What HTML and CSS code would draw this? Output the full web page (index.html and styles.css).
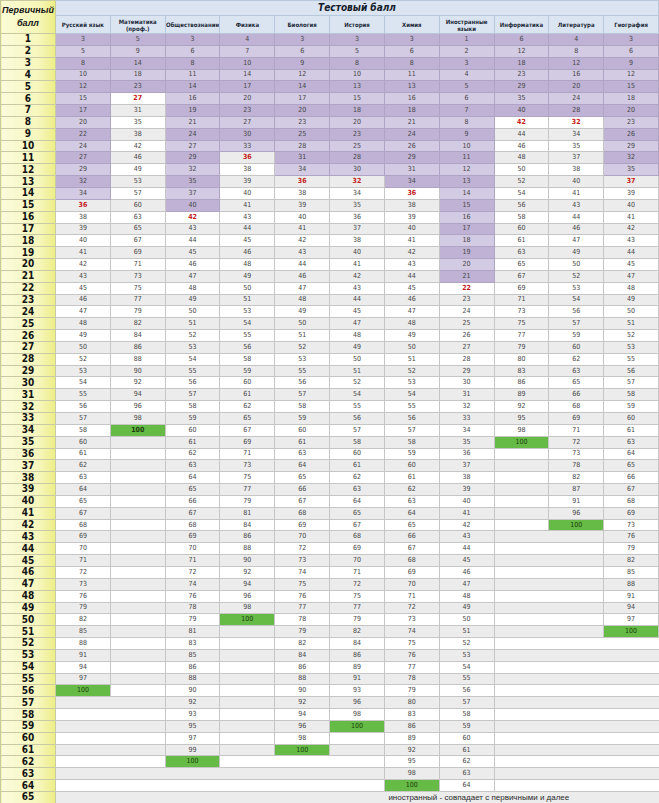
FILE: index.html
```html
<!DOCTYPE html>
<html lang="ru">
<head>
<meta charset="utf-8">
<title>Перевод баллов</title>
<link rel="stylesheet" href="styles.css">
</head>
<body>
<table class="grid">
<colgroup><col class="c0"><col span="11"></colgroup>
<thead>
<tr class="top"><th class="corner" rowspan="2">Первичный<br>балл</th><th class="title" colspan="11">Тестовый балл</th></tr>
<tr class="sub"><th>Русский язык</th><th>Математика<br>(проф.)</th><th>Обществознание</th><th>Физика</th><th>Биология</th><th>История</th><th>Химия</th><th>Иностранные<br>языки</th><th>Информатика</th><th>Литература</th><th>География</th></tr>
</thead>
<tbody>
<tr><th>1</th><td class="p">3</td><td class="p">5</td><td class="p">3</td><td class="p">4</td><td class="p">3</td><td class="p">3</td><td class="p">3</td><td class="p">1</td><td class="p">6</td><td class="p">4</td><td class="p">3</td></tr>
<tr><th>2</th><td class="p">5</td><td class="p">9</td><td class="p">6</td><td class="p">7</td><td class="p">6</td><td class="p">5</td><td class="p">6</td><td class="p">2</td><td class="p">12</td><td class="p">8</td><td class="p">6</td></tr>
<tr><th>3</th><td class="p">8</td><td class="p">14</td><td class="p">8</td><td class="p">10</td><td class="p">9</td><td class="p">8</td><td class="p">8</td><td class="p">3</td><td class="p">18</td><td class="p">12</td><td class="p">9</td></tr>
<tr><th>4</th><td class="p">10</td><td class="p">18</td><td class="p">11</td><td class="p">14</td><td class="p">12</td><td class="p">10</td><td class="p">11</td><td class="p">4</td><td class="p">23</td><td class="p">16</td><td class="p">12</td></tr>
<tr><th>5</th><td class="p">12</td><td class="p">23</td><td class="p">14</td><td class="p">17</td><td class="p">14</td><td class="p">13</td><td class="p">13</td><td class="p">5</td><td class="p">29</td><td class="p">20</td><td class="p">15</td></tr>
<tr><th>6</th><td class="p">15</td><td class="r">27</td><td class="p">16</td><td class="p">20</td><td class="p">17</td><td class="p">15</td><td class="p">16</td><td class="p">6</td><td class="p">35</td><td class="p">24</td><td class="p">18</td></tr>
<tr><th>7</th><td class="p">17</td><td>31</td><td class="p">19</td><td class="p">23</td><td class="p">20</td><td class="p">18</td><td class="p">18</td><td class="p">7</td><td class="p">40</td><td class="p">28</td><td class="p">20</td></tr>
<tr><th>8</th><td class="p">20</td><td>35</td><td class="p">21</td><td class="p">27</td><td class="p">23</td><td class="p">20</td><td class="p">21</td><td class="p">8</td><td class="r">42</td><td class="r">32</td><td class="p">23</td></tr>
<tr><th>9</th><td class="p">22</td><td>38</td><td class="p">24</td><td class="p">30</td><td class="p">25</td><td class="p">23</td><td class="p">24</td><td class="p">9</td><td>44</td><td>34</td><td class="p">26</td></tr>
<tr><th>10</th><td class="p">24</td><td>42</td><td class="p">27</td><td class="p">33</td><td class="p">28</td><td class="p">25</td><td class="p">26</td><td class="p">10</td><td>46</td><td>35</td><td class="p">29</td></tr>
<tr><th>11</th><td class="p">27</td><td>46</td><td class="p">29</td><td class="r">36</td><td class="p">31</td><td class="p">28</td><td class="p">29</td><td class="p">11</td><td>48</td><td>37</td><td class="p">32</td></tr>
<tr><th>12</th><td class="p">29</td><td>49</td><td class="p">32</td><td>38</td><td class="p">34</td><td class="p">30</td><td class="p">31</td><td class="p">12</td><td>50</td><td>38</td><td class="p">35</td></tr>
<tr><th>13</th><td class="p">32</td><td>53</td><td class="p">35</td><td>39</td><td class="r">36</td><td class="r">32</td><td class="p">34</td><td class="p">13</td><td>52</td><td>40</td><td class="r">37</td></tr>
<tr><th>14</th><td class="p">34</td><td>57</td><td class="p">37</td><td>40</td><td>38</td><td>34</td><td class="r">36</td><td class="p">14</td><td>54</td><td>41</td><td>39</td></tr>
<tr><th>15</th><td class="r">36</td><td>60</td><td class="p">40</td><td>41</td><td>39</td><td>35</td><td>38</td><td class="p">15</td><td>56</td><td>43</td><td>40</td></tr>
<tr><th>16</th><td>38</td><td>63</td><td class="r">42</td><td>43</td><td>40</td><td>36</td><td>39</td><td class="p">16</td><td>58</td><td>44</td><td>41</td></tr>
<tr><th>17</th><td>39</td><td>65</td><td>43</td><td>44</td><td>41</td><td>37</td><td>40</td><td class="p">17</td><td>60</td><td>46</td><td>42</td></tr>
<tr><th>18</th><td>40</td><td>67</td><td>44</td><td>45</td><td>42</td><td>38</td><td>41</td><td class="p">18</td><td>61</td><td>47</td><td>43</td></tr>
<tr><th>19</th><td>41</td><td>69</td><td>45</td><td>46</td><td>43</td><td>40</td><td>42</td><td class="p">19</td><td>63</td><td>49</td><td>44</td></tr>
<tr><th>20</th><td>42</td><td>71</td><td>46</td><td>48</td><td>44</td><td>41</td><td>43</td><td class="p">20</td><td>65</td><td>50</td><td>45</td></tr>
<tr><th>21</th><td>43</td><td>73</td><td>47</td><td>49</td><td>46</td><td>42</td><td>44</td><td class="p">21</td><td>67</td><td>52</td><td>47</td></tr>
<tr><th>22</th><td>45</td><td>75</td><td>48</td><td>50</td><td>47</td><td>43</td><td>45</td><td class="r">22</td><td>69</td><td>53</td><td>48</td></tr>
<tr><th>23</th><td>46</td><td>77</td><td>49</td><td>51</td><td>48</td><td>44</td><td>46</td><td>23</td><td>71</td><td>54</td><td>49</td></tr>
<tr><th>24</th><td>47</td><td>79</td><td>50</td><td>53</td><td>49</td><td>45</td><td>47</td><td>24</td><td>73</td><td>56</td><td>50</td></tr>
<tr><th>25</th><td>48</td><td>82</td><td>51</td><td>54</td><td>50</td><td>47</td><td>48</td><td>25</td><td>75</td><td>57</td><td>51</td></tr>
<tr><th>26</th><td>49</td><td>84</td><td>52</td><td>55</td><td>51</td><td>48</td><td>49</td><td>26</td><td>77</td><td>59</td><td>52</td></tr>
<tr><th>27</th><td>50</td><td>86</td><td>53</td><td>56</td><td>52</td><td>49</td><td>50</td><td>27</td><td>79</td><td>60</td><td>53</td></tr>
<tr><th>28</th><td>52</td><td>88</td><td>54</td><td>58</td><td>53</td><td>50</td><td>51</td><td>28</td><td>80</td><td>62</td><td>55</td></tr>
<tr><th>29</th><td>53</td><td>90</td><td>55</td><td>59</td><td>55</td><td>51</td><td>52</td><td>29</td><td>83</td><td>63</td><td>56</td></tr>
<tr><th>30</th><td>54</td><td>92</td><td>56</td><td>60</td><td>56</td><td>52</td><td>53</td><td>30</td><td>86</td><td>65</td><td>57</td></tr>
<tr><th>31</th><td>55</td><td>94</td><td>57</td><td>61</td><td>57</td><td>54</td><td>54</td><td>31</td><td>89</td><td>66</td><td>58</td></tr>
<tr><th>32</th><td>56</td><td>96</td><td>58</td><td>62</td><td>58</td><td>55</td><td>55</td><td>32</td><td>92</td><td>68</td><td>59</td></tr>
<tr><th>33</th><td>57</td><td>98</td><td>59</td><td>65</td><td>59</td><td>56</td><td>56</td><td>33</td><td>95</td><td>69</td><td>60</td></tr>
<tr><th>34</th><td>58</td><td class="g b">100</td><td>60</td><td>67</td><td>60</td><td>57</td><td>57</td><td>34</td><td>98</td><td>71</td><td>61</td></tr>
<tr><th>35</th><td>60</td><td class="e"></td><td>61</td><td>69</td><td>61</td><td>58</td><td>58</td><td>35</td><td class="g">100</td><td>72</td><td>63</td></tr>
<tr><th>36</th><td>61</td><td class="e"></td><td>62</td><td>71</td><td>63</td><td>60</td><td>59</td><td>36</td><td class="e"></td><td>73</td><td>64</td></tr>
<tr><th>37</th><td>62</td><td class="e"></td><td>63</td><td>73</td><td>64</td><td>61</td><td>60</td><td>37</td><td class="e"></td><td>78</td><td>65</td></tr>
<tr><th>38</th><td>63</td><td class="e"></td><td>64</td><td>75</td><td>65</td><td>62</td><td>61</td><td>38</td><td class="e"></td><td>82</td><td>66</td></tr>
<tr><th>39</th><td>64</td><td class="e"></td><td>65</td><td>77</td><td>66</td><td>63</td><td>62</td><td>39</td><td class="e"></td><td>87</td><td>67</td></tr>
<tr><th>40</th><td>65</td><td class="e"></td><td>66</td><td>79</td><td>67</td><td>64</td><td>63</td><td>40</td><td class="e"></td><td>91</td><td>68</td></tr>
<tr><th>41</th><td>67</td><td class="e"></td><td>67</td><td>81</td><td>68</td><td>65</td><td>64</td><td>41</td><td class="e"></td><td>96</td><td>69</td></tr>
<tr><th>42</th><td>68</td><td class="e"></td><td>68</td><td>84</td><td>69</td><td>67</td><td>65</td><td>42</td><td class="e"></td><td class="g">100</td><td>73</td></tr>
<tr><th>43</th><td>69</td><td class="e"></td><td>69</td><td>86</td><td>70</td><td>68</td><td>66</td><td>43</td><td class="e"></td><td class="e"></td><td>76</td></tr>
<tr><th>44</th><td>70</td><td class="e"></td><td>70</td><td>88</td><td>72</td><td>69</td><td>67</td><td>44</td><td class="e"></td><td class="e"></td><td>79</td></tr>
<tr><th>45</th><td>71</td><td class="e"></td><td>71</td><td>90</td><td>73</td><td>70</td><td>68</td><td>45</td><td class="e"></td><td class="e"></td><td>82</td></tr>
<tr><th>46</th><td>72</td><td class="e"></td><td>72</td><td>92</td><td>74</td><td>71</td><td>69</td><td>46</td><td class="e"></td><td class="e"></td><td>85</td></tr>
<tr><th>47</th><td>73</td><td class="e"></td><td>74</td><td>94</td><td>75</td><td>72</td><td>70</td><td>47</td><td class="e"></td><td class="e"></td><td>88</td></tr>
<tr><th>48</th><td>76</td><td class="e"></td><td>76</td><td>96</td><td>76</td><td>75</td><td>71</td><td>48</td><td class="e"></td><td class="e"></td><td>91</td></tr>
<tr><th>49</th><td>79</td><td class="e"></td><td>78</td><td>98</td><td>77</td><td>77</td><td>72</td><td>49</td><td class="e"></td><td class="e"></td><td>94</td></tr>
<tr><th>50</th><td>82</td><td class="e"></td><td>79</td><td class="g">100</td><td>78</td><td>79</td><td>73</td><td>50</td><td class="e"></td><td class="e"></td><td>97</td></tr>
<tr><th>51</th><td>85</td><td class="e"></td><td>81</td><td class="e"></td><td>79</td><td>82</td><td>74</td><td>51</td><td class="e"></td><td class="e"></td><td class="g">100</td></tr>
<tr><th>52</th><td>88</td><td class="e"></td><td>83</td><td class="e"></td><td>82</td><td>84</td><td>75</td><td>52</td><td class="e"></td><td class="e"></td><td class="e"></td></tr>
<tr><th>53</th><td>91</td><td class="e"></td><td>85</td><td class="e"></td><td>84</td><td>86</td><td>76</td><td>53</td><td class="e"></td><td class="e"></td><td class="e"></td></tr>
<tr><th>54</th><td>94</td><td class="e"></td><td>86</td><td class="e"></td><td>86</td><td>89</td><td>77</td><td>54</td><td class="e"></td><td class="e"></td><td class="e"></td></tr>
<tr><th>55</th><td>97</td><td class="e"></td><td>88</td><td class="e"></td><td>88</td><td>91</td><td>78</td><td>55</td><td class="e"></td><td class="e"></td><td class="e"></td></tr>
<tr><th>56</th><td class="g">100</td><td class="e"></td><td>90</td><td class="e"></td><td>90</td><td>93</td><td>79</td><td>56</td><td class="e"></td><td class="e"></td><td class="e"></td></tr>
<tr><th>57</th><td class="e"></td><td class="e"></td><td>92</td><td class="e"></td><td>92</td><td>96</td><td>80</td><td>57</td><td class="e"></td><td class="e"></td><td class="e"></td></tr>
<tr><th>58</th><td class="e"></td><td class="e"></td><td>93</td><td class="e"></td><td>94</td><td>98</td><td>83</td><td>58</td><td class="e"></td><td class="e"></td><td class="e"></td></tr>
<tr><th>59</th><td class="e"></td><td class="e"></td><td>95</td><td class="e"></td><td>96</td><td class="g">100</td><td>86</td><td>59</td><td class="e"></td><td class="e"></td><td class="e"></td></tr>
<tr><th>60</th><td class="e"></td><td class="e"></td><td>97</td><td class="e"></td><td>98</td><td class="e"></td><td>89</td><td>60</td><td class="e"></td><td class="e"></td><td class="e"></td></tr>
<tr><th>61</th><td class="e"></td><td class="e"></td><td>99</td><td class="e"></td><td class="g">100</td><td class="e"></td><td>92</td><td>61</td><td class="e"></td><td class="e"></td><td class="e"></td></tr>
<tr><th>62</th><td class="e"></td><td class="e"></td><td class="g">100</td><td class="e"></td><td class="e"></td><td class="e"></td><td>95</td><td>62</td><td class="e"></td><td class="e"></td><td class="e"></td></tr>
<tr><th>63</th><td class="e"></td><td class="e"></td><td class="e"></td><td class="e"></td><td class="e"></td><td class="e"></td><td>98</td><td>63</td><td class="e"></td><td class="e"></td><td class="e"></td></tr>
<tr><th>64</th><td class="e"></td><td class="e"></td><td class="e"></td><td class="e"></td><td class="e"></td><td class="e"></td><td class="g">100</td><td>64</td><td class="e"></td><td class="e"></td><td class="e"></td></tr>
<tr><th>65</th><td class="e" colspan="6"></td><td class="e note" colspan="5">иностранный - совпадает с первичными и далее</td></tr>
</tbody>
</table>
</body>
</html>
```
FILE: styles.css
```css
html, body {
  margin: 0;
  padding: 0;
  background: #ffffff;
}

.grid {
  width: 659px;
  border-collapse: collapse;
  table-layout: fixed;
  font-family: "Liberation Sans Narrow", "DejaVu Sans Condensed", "Liberation Sans", Arial, sans-serif;
}

.c0 {
  width: 55px;
}

thead th {
  padding: 0;
  background: #dbe5f1;
  border: 1px solid #b7c8dc;
  color: #1e2b3a;
  font-weight: bold;
  overflow: hidden;
}

.top {
  height: 15px;
}

.sub {
  height: 18px;
}

.title {
  font-size: 10px;
  font-style: italic;
  line-height: 12px;
  color: #15202c;
}

.sub th {
  font-size: 6px;
  line-height: 7px;
  white-space: nowrap;
}

thead .corner {
  background: linear-gradient(to right, #fbfbd6 0%, #f6f6b8 70%, #ecec84 100%);
  border-color: #c9c9a0;
  font-family: "Liberation Sans", Arial, sans-serif;
  font-size: 9px;
  font-style: italic;
  line-height: 13px;
  color: #151515;
  white-space: nowrap;
}

tbody tr {
  height: 11.846px;
}

tbody th {
  padding: 0;
  font-size: 10px;
  line-height: 10px;
  font-weight: bold;
  color: #121212;
  background: linear-gradient(to right, #fbfbdc 0%, #f6f6bc 70%, #eded86 100%);
  border: 1px solid #c9c9a6;
  overflow: hidden;
}

tbody td {
  padding: 0;
  text-align: center;
  font-size: 7px;
  line-height: 9px;
  color: #474747;
  border: 1px solid #c6c6c6;
  overflow: hidden;
  white-space: nowrap;
}

tbody tr:nth-child(odd) td {
  background: #ececec;
}

tbody tr:nth-child(even) td {
  background: #ffffff;
}

tbody tr:nth-child(odd) td.p {
  background: #bfb2d5;
}

tbody tr:nth-child(even) td.p {
  background: #d3cae3;
}

tbody td.p {
  border-color: #b0a4c4;
}

tbody tr td.g {
  background: #66bb46;
  color: #1b3c0c;
}

td.b {
  font-weight: bold;
}

td.r {
  color: #c41a1a;
  font-weight: bold;
}

tbody td.e {
  border-left: none;
  border-right: none;
}

tbody td.note {
  text-align: left;
  padding-left: 4px;
  font-family: "Liberation Sans", Arial, sans-serif;
  font-size: 8px;
  color: #2a2a2a;
}
```
